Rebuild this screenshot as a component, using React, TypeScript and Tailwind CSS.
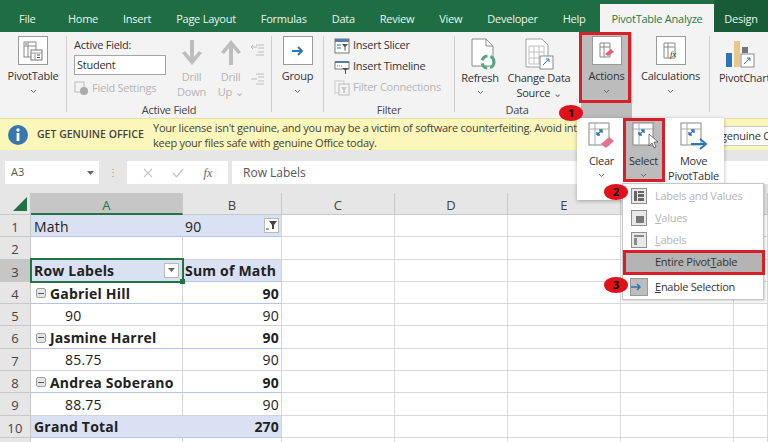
import React from "react";

const Chev = ({ c = "#666" }: { c?: string }) => (
  <svg width="7" height="5" viewBox="0 0 7 5" className="shrink-0"><path d="M1 1l2.5 2.5L6 1" fill="none" stroke={c} strokeWidth="1" /></svg>
);

const TableIcon = ({ size = 20, extra }: { size?: number; extra?: React.ReactNode }) => (
  <svg width={size} height={size} viewBox="0 0 20 20">
    <rect x="1" y="1" width="12" height="15" fill="#fff" stroke="#8a8a8a" />
    <path d="M1 5h12M5 1v15" stroke="#8a8a8a" />
    <rect x="2" y="2" width="2.5" height="2.5" fill="#bbb" />
    <rect x="8" y="9" width="11" height="10" fill="#fff" stroke="#777" />
    <path d="M8 12h11M12 12v7" stroke="#999" />
    <path d="M14 14h3M14 16.5h3" stroke="#555" />
    {extra}
  </svg>
);

const BoxBtn = ({ children }: { children: React.ReactNode }) => (
  <div className="w-[30px] h-[29px] bg-white border border-[#9a9a9a] flex items-center justify-center shrink-0">{children}</div>
);

const Big = ({ w, icon, label, chev = true, grey = false, cls = "" }: { w: number; icon: React.ReactNode; label: string; chev?: boolean; grey?: boolean; cls?: string }) => (
  <div style={{ width: w }} className={`flex flex-col items-center pt-[4px] shrink-0 ${cls}`}>
    <BoxBtn>{icon}</BoxBtn>
    <div className={`mt-[3px] leading-[16px] whitespace-nowrap ${grey ? "text-[#aaa]" : ""}`}>{label}</div>
    {chev && <div className="mt-[5px]"><Chev /></div>}
  </div>
);

const Sep = () => <div className="w-px bg-[#cfcfcf] h-[76px] mt-[4px] shrink-0" />;

const GroupLabel = ({ children }: { children: string }) => (
  <div className="absolute bottom-[0px] left-0 right-0 text-center text-[11px] leading-[16px] text-[#444]">{children}</div>
);

const tabs = ["Home", "Insert", "Page Layout", "Formulas", "Data", "Review", "View", "Developer", "Help"];

const ArrowDown = ({ up = false }: { up?: boolean }) => (
  <svg width="24" height="27" viewBox="0 0 24 27" style={{ transform: up ? "rotate(180deg)" : undefined }}>
    <path d="M12 26L2 14l3-2 5 6V1h4v17l5-6 3 2z" fill="#bdbdbd" />
  </svg>
);

const SmallRows = ({ out = false }: { out?: boolean }) => (
  <svg width="15" height="15" viewBox="0 0 15 15">
    <path d="M6 2h8M8 5h6M8 9h6M6 12h8" stroke="#cfcfcf" strokeWidth="1.5" />
    <path d={out ? "M1 7h6" : "M1 4h6M3 2L1 4l2 2"} stroke="#bbb" fill="none" />
  </svg>
);

const SmallLine = ({ icon, label, grey = false }: { icon: React.ReactNode; label: string; grey?: boolean }) => (
  <div className={`flex items-center gap-[3px] h-[21px] whitespace-nowrap ${grey ? "text-[#b4b4b4]" : ""}`}>
    <span className="w-[16px] h-[16px] flex items-center justify-center shrink-0">{icon}</span>
    {label}
  </div>
);

const Arrows = () => (
  <g fill="none" stroke="#2e75b6" strokeWidth="1.4">
    <path d="M10 15l5-5M12 10h3v3M10 15h3M10 15v-3" />
  </g>
);

const Ellipse = ({ n, cls }: { n: number; cls: string }) => (
  <div className={`absolute w-[24px] h-[16px] rounded-[50%] bg-[#e2101a] text-black font-bold text-[11px] leading-[16px] text-center ${cls}`}>{n}</div>
);

const colHead = ["A", "B", "C", "D", "E", "F", "G"];
const colW = ["w-[152px]", "w-[99px]", "w-[113px]", "w-[113px]", "w-[113px]", "w-[113px]", "w-[34px]"];

type Row = { a?: string; b?: string; fill?: boolean; bold?: boolean; indent?: boolean; toggle?: boolean; line?: boolean; filter?: boolean; drop?: boolean; bRight?: boolean };
const rows: Row[] = [
  { a: "Math", b: "90", fill: true, filter: true },
  {},
  { a: "Row Labels", b: "Sum of Math", fill: true, bold: true, drop: true },
  { a: "Gabriel Hill", b: "90", bold: true, toggle: true, line: true, bRight: true },
  { a: "90", b: "90", indent: true, bRight: true },
  { a: "Jasmine Harrel", b: "90", bold: true, toggle: true, line: true, bRight: true },
  { a: "85.75", b: "90", indent: true, bRight: true },
  { a: "Andrea Soberano", b: "90", bold: true, toggle: true, line: true, bRight: true },
  { a: "88.75", b: "90", indent: true, bRight: true },
  { a: "Grand Total", b: "270", fill: true, bold: true, bRight: true },
];

const Toggle = () => (
  <span className="w-[10px] h-[10px] border border-[#9aa0a8] bg-[#e6e6e6] rounded-[2px] mr-[4px] flex items-center justify-center shrink-0">
    <span className="w-[6px] h-px bg-[#555]" />
  </span>
);

const MenuItem = ({ icon, label, grey = false, active = false }: { icon?: React.ReactNode; label: React.ReactNode; grey?: boolean; active?: boolean }) => (
  <div className={`flex items-center h-[22px] ${active ? "bg-[#b4b4b4]" : ""}`}>
    <span className="w-[32px] flex items-center justify-center shrink-0">{icon}</span>
    <span className={`whitespace-nowrap ${grey ? "text-[#b5b5b5]" : "text-[#333]"}`}>{label}</span>
  </div>
);

const MenuIcon = ({ kind }: { kind: number }) => (
  <div className="w-[16px] h-[16px] border border-[#8f8f8f] bg-[#e8e8e8] flex items-center justify-center">
    <svg width="12" height="12" viewBox="0 0 12 12">
      {kind === 0 && <path d="M1 1h3v10H1zM5 1h6v2H5zM5 4h6v3H5zM5 8h6v3H5z" fill="#666" />}
      {kind === 1 && <path d="M3 4h8v7H3z" fill="#777" />}
      {kind === 2 && <path d="M1 1h10v2H1zM1 4h3v7H1z" fill="#888" />}
    </svg>
  </div>
);

export default function App() {
  return (
    <div className="relative w-[768px] h-[442px] overflow-hidden bg-white text-[11px] tracking-[-0.25px] text-[#333]" style={{ fontFamily: '"Open Sans", "Noto Sans", sans-serif' }}>
      {/* Tabs */}
      <div className="h-[32px] bg-[#1f6e43] flex items-end text-white">
        <div className="w-[600px] shrink-0 flex pl-[19px] text-[#eaf3ee]">
          <div className="mr-[20px] h-[32px] leading-[37px]">File</div>
          {tabs.map((t) => (
            <div key={t} className="px-[12.5px] h-[32px] leading-[37px] whitespace-nowrap">{t}</div>
          ))}
        </div>
        <div className="w-[114px] h-[28px] bg-[#f3f3f3] text-[#1f7a4a] text-center leading-[30px] whitespace-nowrap">PivotTable Analyze</div>
        <div className="w-[54px] h-[32px] bg-[#185c37] text-center leading-[37px] text-[#eaf3ee]">Design</div>
      </div>

      {/* Ribbon */}
      <div className="h-[86px] bg-[#f3f3f3] flex items-start">
        <Big w={66} icon={<TableIcon />} label="PivotTable" />
        <Sep />

        <div className="relative w-[204px] h-[86px] shrink-0 flex">
          <div className="pl-[7px] pt-[5px] w-[105px] shrink-0">
            <div className="leading-[16px]">Active Field:</div>
            <div className="mt-[2px] w-[92px] h-[20px] bg-white border border-[#a5a5a5] px-[2px] leading-[17px]">Student</div>
            <div className="mt-[4px] flex items-center gap-[3px] text-[#b4b4b4] whitespace-nowrap leading-[18px]">
              <svg width="15" height="15" viewBox="0 0 15 15"><rect x="1" y="1" width="9" height="10" fill="none" stroke="#bbb" /><circle cx="10" cy="10" r="4" fill="#aaa" /></svg>
              Field Settings
            </div>
          </div>
          <div className="w-[39px] pt-[7px] flex flex-col items-center text-[#b4b4b4] leading-[15px] text-center">
            <ArrowDown />
            <div className="mt-[3px]">Drill<br />Down</div>
          </div>
          <div className="w-[39px] pt-[7px] flex flex-col items-center text-[#b4b4b4] leading-[15px] text-center">
            <ArrowDown up />
            <div className="mt-[3px] whitespace-nowrap">Drill<br />Up ⌄</div>
          </div>
          <div className="pt-[11px] flex flex-col gap-[14px]">
            <SmallRows />
            <SmallRows out />
          </div>
          <GroupLabel>Active Field</GroupLabel>
        </div>
        <Sep />

        <Big w={51} icon={<svg width="14" height="10" viewBox="0 0 14 10"><path d="M1 5h10M7 1l4 4-4 4" fill="none" stroke="#2e75b6" strokeWidth="2" /></svg>} label="Group" />
        <Sep />

        <div className="relative w-[130px] h-[86px] shrink-0 pl-[10px] pt-[3px]">
          <SmallLine label="Insert Slicer" icon={<svg width="16" height="16" viewBox="0 0 16 16"><rect x="1" y="1" width="14" height="14" fill="#fff" stroke="#777" /><rect x="1" y="1" width="14" height="3" fill="#5a7da0" /><path d="M3 7h4M3 10h4" stroke="#2e75b6" /><path d="M8 6h6l-2.5 3v4l-1-.5V9z" fill="#555" /></svg>} />
          <SmallLine label="Insert Timeline" icon={<svg width="16" height="16" viewBox="0 0 16 16"><rect x="1" y="3" width="14" height="7" fill="#fff" stroke="#777" /><rect x="1" y="2" width="14" height="2" fill="#5a7da0" /><path d="M3 7h6" stroke="#2e75b6" strokeDasharray="1 1" /><path d="M8 9h7l-3 2.5V15h-1v-3.5z" fill="#555" /></svg>} />
          <SmallLine grey label="Filter Connections" icon={<svg width="16" height="16" viewBox="0 0 16 16"><rect x="1" y="1" width="9" height="12" fill="none" stroke="#ccc" /><rect x="5" y="4" width="10" height="11" fill="#f3f3f3" stroke="#bbb" /><path d="M7 7h6l-2 3v3h-2v-3z" fill="#ccc" /></svg>} />
          <GroupLabel>Filter</GroupLabel>
        </div>
        <Sep />

        <div className="relative w-[124px] h-[86px] shrink-0 flex">
          <div className="w-[50px] flex flex-col items-center pt-[6px]">
            <svg width="26" height="32" viewBox="0 0 26 32" className="ml-[6px]">
              <path d="M2 1h14l7 7v20H2z" fill="#fff" stroke="#8a8a8a" />
              <path d="M16 1v7h7" fill="none" stroke="#8a8a8a" />
              <circle cx="18" cy="24" r="6" fill="none" stroke="#5aa382" strokeWidth="3" strokeDasharray="7 3" />
            </svg>
            <div className="leading-[16px] mt-[0px]">Refresh</div>
            <div className="mt-[4px]"><Chev /></div>
          </div>
          <div className="w-[68px] flex flex-col items-center pt-[6px]">
            <svg width="30" height="32" viewBox="0 0 30 32">
              <path d="M2 1h16l6 6v22H2z" fill="#fff" stroke="#a0a0a0" />
              <path d="M5 8h15v18H5zM5 14h15M5 20h15M10 8v18M15 8v18" fill="none" stroke="#c0c0c0" />
              <rect x="16" y="18" width="13" height="13" fill="#fff" stroke="#8a8a8a" />
              <path d="M19 27l6-6M22 21h3v3" stroke="#2e75b6" fill="none" />
            </svg>
            <div className="leading-[15px] text-center whitespace-nowrap mt-[0px]">Change Data<br />Source <span className="text-[#777]">⌄</span></div>
          </div>
          <GroupLabel>Data</GroupLabel>
        </div>

        <Big w={51} cls="ml-[2px] h-[86px] bg-[#bcbcbc]" icon={<svg width="20" height="20" viewBox="0 0 20 20"><path d="M3 2h10v14H3zM3 6h10M7 2v14" fill="#fff" stroke="#888" /><path d="M8 13l6-5 3 3-6 4z" fill="#e0607a" /></svg>} label="Actions" />
        <Big w={77} icon={<svg width="20" height="20" viewBox="0 0 20 20"><path d="M3 2h11v15H3zM3 6h11M7 2v15" fill="#fff" stroke="#888" /><text x="9" y="16" fontSize="9" fontStyle="italic" fontFamily="Liberation Serif, serif" fill="#333">fx</text></svg>} label="Calculations" />
        <Sep />
        <div className="pl-[9px] pt-[7px] flex flex-col w-[60px] shrink-0">
          <svg width="30" height="30" viewBox="0 0 30 30" className="ml-[6px]">
            <rect x="1" y="14" width="6" height="14" fill="#2e75b6" />
            <rect x="9" y="2" width="6" height="26" fill="#e8c888" />
            <rect x="17" y="8" width="6" height="6" fill="#777" />
            <rect x="16" y="15" width="13" height="13" fill="#fff" stroke="#8a8a8a" />
            <path d="M19 25l6-6M22 19h3v3" stroke="#2e75b6" fill="none" />
          </svg>
          <div className="leading-[16px] mt-[1px] whitespace-nowrap">PivotChart</div>
        </div>
      </div>

      {/* Notification */}
      <div className="h-[32px] bg-[#fbf6b9] border-t border-[#e4e0a8] flex items-center relative">
        <svg width="20" height="20" viewBox="0 0 20 20" className="ml-[8px] shrink-0"><circle cx="10" cy="10" r="10" fill="#3a76ae" /><rect x="8.6" y="8" width="2.8" height="8" fill="#fff" /><circle cx="10" cy="5" r="1.7" fill="#fff" /></svg>
        <div className="ml-[9px] w-[116px] font-semibold text-[10.5px] tracking-[0px] text-[#444] whitespace-nowrap">GET GENUINE OFFICE</div>
        <div className="leading-[15px] text-[#444] whitespace-nowrap">Your license isn't genuine, and you may be a victim of software counterfeiting. Avoid interruption<br />keep your files safe with genuine Office today.</div>
        <div className="absolute left-[720px] top-[7px] w-[48px] h-[20px] overflow-hidden bg-white border-y border-l border-[#c9c9c9] leading-[18px] whitespace-nowrap">genuine Office</div>
      </div>

      {/* Formula bar */}
      <div className="h-[43px] bg-[#e6e6e6] flex items-start pt-[11px] tracking-[0px]">
        <div className="ml-[5px] w-[94px] h-[23px] bg-white flex items-center justify-between pl-[6px] pr-[5px] text-[#555]">
          A3
          <svg width="7" height="4" viewBox="0 0 7 4"><path d="M0 0h7L3.5 4z" fill="#666" /></svg>
        </div>
        <div className="w-[28px] h-[23px] text-center text-[#999] leading-[23px] text-[10px]">⋮</div>
        <div className="w-[101px] h-[23px] bg-white flex items-center justify-around px-[6px]">
          <svg width="10" height="10" viewBox="0 0 10 10"><path d="M1 1l8 8M9 1l-8 8" stroke="#c4c4c4" strokeWidth="1.2" /></svg>
          <svg width="12" height="10" viewBox="0 0 12 10"><path d="M1 5l3.5 4L11 1" fill="none" stroke="#c4c4c4" strokeWidth="1.2" /></svg>
          <span className="italic text-[#666] text-[12px]" style={{ fontFamily: '"Liberation Serif", serif' }}>fx</span>
        </div>
        <div className="ml-[4px] flex-1 h-[23px] bg-white pl-[11px] leading-[23px] text-[12px] text-[#555]">Row Labels</div>
      </div>

      {/* Sheet */}
      <div className="relative text-[14px] tracking-[0.2px] text-[#222]">
        <div className="flex h-[22px] bg-[#e6e6e6]">
          <div className="w-[31px] shrink-0 relative border-r border-b border-[#c8c8c8] flex items-end justify-end pr-[3px] pb-[3px]">
            <svg width="14" height="14" viewBox="0 0 14 14"><path d="M14 0v14H0z" fill="#217346" /></svg>
          </div>
          {colHead.map((c, i) => (
            <div key={c} className={`${colW[i]} shrink-0 text-center leading-[24px] text-[13px] border-r border-[#c8c8c8] ${i === 0 ? "bg-[#c6c6c6] border-b-2 border-b-[#217346] text-[#217346]" : "border-b text-[#444] border-b-[#c8c8c8]"}`}>{c}</div>
          ))}
        </div>
        {rows.concat([{}]).map((r, i) => (
          <div key={i} className="flex h-[22.3px]">
            <div className={`w-[31px] shrink-0 text-center leading-[25px] text-[13px] text-[#444] border-r border-b border-[#c8c8c8] ${i === 2 ? "bg-[#c6c6c6]" : "bg-[#e6e6e6]"}`}>{i < 10 ? i + 1 : ""}</div>
            <div className={`w-[152px] shrink-0 flex items-center relative pt-[1px] border-r ${r.fill ? "bg-[#d9e1f2] border-r-[#d9e1f2]" : "border-r-[#d4d4d4]"} ${r.line ? "border-b border-b-[#b4c6e7]" : r.fill ? "border-b border-b-[#b4c6e7]" : "border-b border-b-[#d4d4d4]"} ${r.indent ? "pl-[34px]" : r.toggle ? "pl-[5px]" : "pl-[3px]"} ${r.bold ? "font-bold" : ""} whitespace-nowrap`}>
              {r.toggle && <Toggle />}
              {r.a}
              {r.drop && (
                <span className="absolute right-[3px] top-[3px] w-[15px] h-[15px] bg-white border border-[#b8b8b8] flex items-center justify-center">
                  <svg width="7" height="4" viewBox="0 0 7 4"><path d="M0 0h7L3.5 4z" fill="#666" /></svg>
                </span>
              )}
            </div>
            <div className={`w-[99px] shrink-0 flex items-center relative pt-[1px] border-r ${r.fill ? "bg-[#d9e1f2]" : ""} border-r-[#d4d4d4] ${r.line || r.fill ? "border-b border-b-[#b4c6e7]" : "border-b border-b-[#d4d4d4]"} ${r.bRight ? "justify-end pr-[2px]" : "pl-[2px]"} ${r.bold ? "font-bold" : ""} whitespace-nowrap`}>
              {r.b}
              {r.filter && (
                <span className="absolute right-[2px] top-[3px] w-[15px] h-[15px] bg-white border border-[#b8b8b8] flex items-center justify-center">
                  <svg width="11" height="9" viewBox="0 0 11 9"><path d="M3 0h8L8 4v4H6V4z" fill="#444" /><path d="M0 8h3" stroke="#444" /></svg>
                </span>
              )}
            </div>
            {[113, 113, 113, 113, 34].map((w, k) => (
              <div key={k} style={{ width: w }} className="shrink-0 border-r border-b border-[#d9d9d9]" />
            ))}
          </div>
        ))}
        {/* selected cell */}
        <div className="absolute left-[30px] top-[65px] w-[154px] h-[25px] border-2 border-[#217346]">
          <div className="absolute -right-[3px] -bottom-[3px] w-[5px] h-[5px] bg-[#217346]" />
        </div>
      </div>

      {/* Actions popup */}
      <div className="absolute left-[577px] top-[118px] w-[147px] h-[82px] bg-white shadow-[0_1px_4px_rgba(0,0,0,0.3)] flex pl-[2px] text-[#333]">
        <div className="w-[45px] flex flex-col items-center pt-[2px]">
          <svg width="30" height="32" viewBox="0 0 30 32"><rect x="2" y="3" width="20" height="22" fill="#fff" stroke="#888" /><path d="M2 9h20M8 3v22" stroke="#aaa" /><Arrows /><path d="M14 24l8-7 5 4-8 7z" fill="#e2738a" /></svg>
          <div className="leading-[16px] mt-[1px]">Clear</div>
          <div className="mt-[4px]"><Chev /></div>
        </div>
        <div className="w-[39px] h-[62px] bg-[#bcbcbc] flex flex-col items-center pt-[2px] shrink-0">
          <svg width="30" height="32" viewBox="0 0 30 32"><rect x="4" y="3" width="20" height="22" fill="#fff" stroke="#888" /><path d="M4 9h20M10 3v22" stroke="#aaa" /><Arrows /><path d="M20 14v12l3-3 2 5 2-1-2-5h4z" fill="#fff" stroke="#444" strokeWidth=".7" /></svg>
          <div className="leading-[16px] mt-[1px]">Select</div>
          <div className="mt-[4px]"><Chev /></div>
        </div>
        <div className="flex-1 flex flex-col items-center pt-[2px]">
          <svg width="30" height="32" viewBox="0 0 30 32"><rect x="2" y="3" width="20" height="22" fill="#fff" stroke="#888" /><path d="M2 9h20M8 3v22" stroke="#aaa" /><Arrows /><path d="M12 24h14M21 19l6 5-6 5" fill="none" stroke="#2e75b6" strokeWidth="2" /></svg>
          <div className="leading-[15px] mt-[1px] text-center">Move<br />PivotTable</div>
        </div>
      </div>

      {/* Select menu */}
      <div className="absolute left-[622px] top-[183px] w-[142px] h-[117px] bg-white border border-[#c6c6c6] shadow-[1px_1px_3px_rgba(0,0,0,0.2)] pt-[1px]">
        <MenuItem grey icon={<MenuIcon kind={0} />} label={<>Labels <span className="underline">a</span>nd Values</>} />
        <MenuItem grey icon={<MenuIcon kind={1} />} label={<><span className="underline">V</span>alues</>} />
        <MenuItem grey icon={<MenuIcon kind={2} />} label={<><span className="underline">L</span>abels</>} />
        <MenuItem active label={<>Entire Pivot<span className="underline">T</span>able</>} />
        <div className="h-[3px]" />
        <MenuItem icon={<div className="w-[18px] h-[18px] bg-[#bdbdbd] border border-[#999] flex items-center"><svg width="16" height="10" viewBox="0 0 16 10"><path d="M0 5h9M6 2l3 3-3 3" fill="none" stroke="#2e75b6" strokeWidth="1.6" /></svg></div>} label={<><span className="underline">E</span>nable Selection</>} />
      </div>

      {/* Callouts */}
      <div className="absolute left-[579px] top-[32px] w-[52px] h-[71px] border-[3px] border-[#d5202a]" />
      <div className="absolute left-[623px] top-[118px] w-[42px] h-[64px] border-[3px] border-[#d5202a]" />
      <div className="absolute left-[623px] top-[250px] w-[142px] h-[25px] border-[3px] border-[#d5202a]" />
      <Ellipse n={1} cls="left-[559px] top-[105px]" />
      <Ellipse n={2} cls="left-[604px] top-[184px]" />
      <Ellipse n={3} cls="left-[604px] top-[277px]" />
    </div>
  );
}
